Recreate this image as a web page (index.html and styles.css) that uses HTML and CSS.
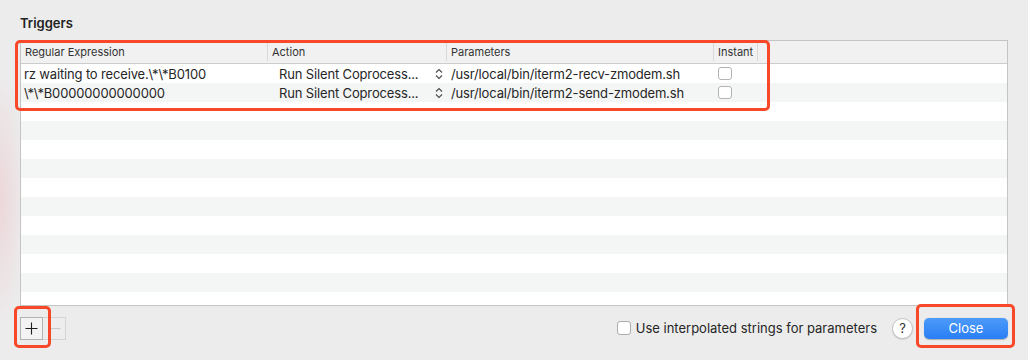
FILE: index.html
```html
<!DOCTYPE html>
<html lang="en">
<head>
  <meta charset="UTF-8" />
  <title>Triggers</title>
  <link rel="stylesheet" href="styles.css">
</head>
<body>
  <div class="sheet">
    <h2 class="title">Triggers</h2>

    <!-- trigger table -->
    <div class="table">
      <div class="row head">
        <div class="cell">Regular Expression</div>
        <div class="cell">Action</div>
        <div class="cell">Parameters</div>
        <div class="cell">Instant</div>
        <div class="cell last"></div>
      </div>
      <div class="row">
        <div class="cell">rz waiting to receive.\*\*B0100</div>
        <div class="cell action">
          <span>Run Silent Coprocess...</span>
          <svg class="stepper" width="8" height="12" viewBox="0 0 8 12"><path d="M1 4.5 L4 1.5 L7 4.5 M1 7.5 L4 10.5 L7 7.5" fill="none" stroke="#4a4a4a" stroke-width="1.1"/></svg>
        </div>
        <div class="cell">/usr/local/bin/iterm2-recv-zmodem.sh</div>
        <div class="cell"><span class="check"></span></div>
        <div class="cell last"></div>
      </div>
      <div class="row">
        <div class="cell">\*\*B00000000000000</div>
        <div class="cell action">
          <span>Run Silent Coprocess...</span>
          <svg class="stepper" width="8" height="12" viewBox="0 0 8 12"><path d="M1 4.5 L4 1.5 L7 4.5 M1 7.5 L4 10.5 L7 7.5" fill="none" stroke="#4a4a4a" stroke-width="1.1"/></svg>
        </div>
        <div class="cell">/usr/local/bin/iterm2-send-zmodem.sh</div>
        <div class="cell"><span class="check"></span></div>
        <div class="cell last"></div>
      </div>
      <div class="row"></div>
      <div class="row"></div>
      <div class="row"></div>
      <div class="row"></div>
      <div class="row"></div>
      <div class="row"></div>
      <div class="row"></div>
      <div class="row"></div>
      <div class="row"></div>
      <div class="row"></div>
      <div class="row"></div>
    </div>

    <!-- bottom bar -->
    <div class="footer">
      <div class="seg">
        <button class="seg-btn">
          <svg width="13" height="13" viewBox="0 0 13 13"><path d="M6.5 0.5 V12.5 M0.5 6.5 H12.5" stroke="#1f1f1f" stroke-width="1.1"/></svg>
        </button>
        <button class="seg-btn off">
          <svg width="13" height="13" viewBox="0 0 13 13"><path d="M0.5 6.5 H12.5" stroke="#c9c9c9" stroke-width="1.1"/></svg>
        </button>
      </div>
      <label class="option"><span class="check"></span>Use interpolated strings for parameters</label>
      <button class="help">?</button>
      <button class="close">Close</button>
    </div>
  </div>

  <!-- annotation marks -->
  <div class="mark mark-table"></div>
  <div class="mark mark-add"></div>
  <div class="mark mark-close"></div>
</body>
</html>
```

FILE: styles.css
```css
* {
  margin: 0;
  padding: 0;
  box-sizing: border-box;
}

html, body {
  width: 1028px;
  height: 360px;
  overflow: hidden;
}

body {
  position: relative;
  font-family: Inter, 'Noto Sans', sans-serif;
  font-size: 13px;
  color: #262626;
  background:
    radial-gradient(ellipse 26px 130px at 0 200px, rgba(236, 205, 210, 0.7), rgba(236, 236, 236, 0)),
    #ececec;
}

.sheet {
  padding: 0 20px;
}

.title {
  font-size: 13px;
  font-weight: 600;
  line-height: 16px;
  padding-top: 15px;
  margin-bottom: 9px;
  color: #222;
}

/* table */
.table {
  height: 266px;
  border: 1px solid #c4c4c4;
  background: #fff;
  overflow: hidden;
}

.row {
  display: grid;
  grid-template-columns: 247px 179px 267px 44px 1fr;
  height: 19px;
  align-items: center;
  letter-spacing: -0.15px;
}

.row:nth-child(odd) {
  background: #f4f5f5;
}

.row.head {
  height: 23px;
  background: #f1f1f1;
  border-bottom: 1px solid #cdcdcd;
  font-size: 11px;
  color: #333;
  letter-spacing: 0;
}

.cell {
  white-space: nowrap;
  overflow: hidden;
  padding-left: 3px;
}

.head .cell {
  padding-left: 4px;
  border-right: 1px solid #d8d8d8;
  line-height: 18px;
}

.head .cell.last {
  border-right: none;
}

.cell.action {
  display: flex;
  align-items: center;
  justify-content: space-between;
  padding-left: 11px;
  padding-right: 4px;
}

.row .cell:nth-child(3) {
  padding-left: 4px;
}

.row .cell:nth-child(4) {
  padding-left: 4px;
  display: flex;
}

.check {
  display: inline-block;
  width: 14px;
  height: 13px;
  border: 1px solid #b3b3b3;
  border-radius: 3px;
  background: #fff;
}

/* footer */
.footer {
  display: flex;
  align-items: center;
  height: 44px;
}

.seg {
  display: flex;
}

.seg-btn {
  width: 23px;
  height: 23px;
  border: 1px solid #b2b2b2;
  background: #f3f3f3;
  display: flex;
  align-items: center;
  justify-content: center;
}

.seg-btn.off {
  border-color: #d4d4d4;
  border-left: none;
  background: #ededed;
}

.option {
  margin-left: auto;
  display: flex;
  align-items: center;
  gap: 5px;
  font-size: 13px;
  color: #262626;
}

.option .check {
  width: 14px;
  height: 14px;
  border-color: #adadad;
}

.help {
  margin-left: 15px;
  width: 21px;
  height: 21px;
  border-radius: 50%;
  border: 1px solid #c2c2c2;
  background: #fff;
  box-shadow: 0 1px 1px rgba(0, 0, 0, 0.12);
  font-family: Inter, sans-serif;
  font-size: 13px;
  color: #333;
}

.close {
  margin-left: 11px;
  width: 84px;
  height: 21px;
  border: none;
  border-radius: 5px;
  background: linear-gradient(#4d9bf9, #2a7ef5);
  box-shadow: 0 0.5px 1px rgba(0, 0, 0, 0.25);
  color: #fff;
  font-family: Inter, sans-serif;
  font-size: 13px;
}

/* red annotation boxes over the screenshot */
.mark {
  position: absolute;
  border: 3px solid #f8482a;
  border-radius: 5px;
}

.mark-table {
  left: 15px;
  top: 40px;
  width: 755px;
  height: 71px;
}

.mark-add {
  left: 14px;
  top: 306px;
  width: 37px;
  height: 42px;
}

.mark-close {
  left: 916px;
  top: 304px;
  width: 99px;
  height: 44px;
}
```
